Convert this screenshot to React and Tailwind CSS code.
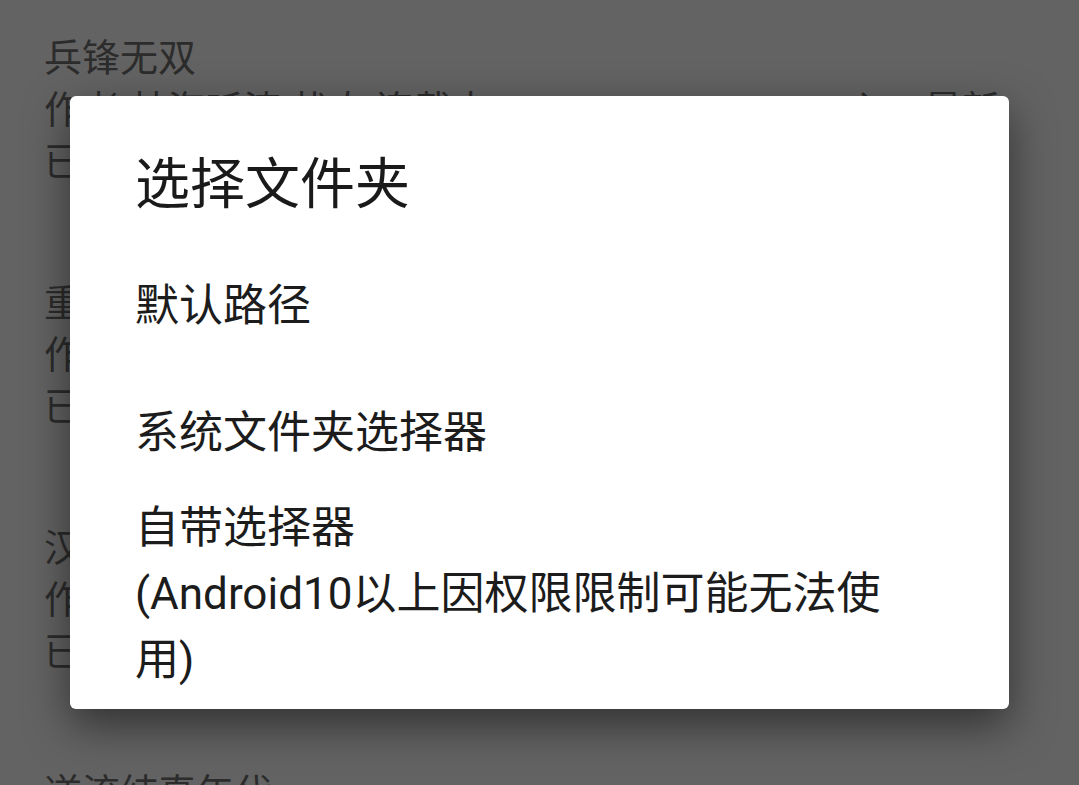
import React from 'react';

const font = { fontFamily: '"Roboto", "Noto Sans CJK SC", sans-serif' };

const books = [
  { title: '兵锋无双', author: '作者:林海听涛  状态:连载中', extra: ['入', '最新'], read: '已读到:第一千二百章 大战将起' },
  { title: '重生之都市修仙', author: '作者:十里剑神  状态:已完结', extra: [], read: '已读到:第八百零六章 归来' },
  { title: '汉乡', author: '作者:孑与2  状态:已完结', extra: [], read: '已读到:第三十二章 蜀中' },
  { title: '逆流纯真年代', author: '作者:人间武库', extra: [], read: '已读到:第五章' },
];

const options = ['默认路径', '系统文件夹选择器'];

export default function App() {
  return (
    <div className="relative w-full h-[785px] overflow-hidden bg-[#636363]" style={font}>
      {/* 背景里的书架列表(被遮罩压暗) */}
      <div className="flex flex-col gap-[89px] pt-[32px] pl-[44px] pr-[44px] text-[38px] leading-[52px] text-[#2c2c2c]">
        {books.map((b) => (
          <div key={b.title} className="flex flex-col">
            <div>{b.title}</div>
            <div className="flex justify-between whitespace-nowrap">
              <span>{b.author}</span>
              <span className="flex gap-[36px] mr-[35px]">
                {b.extra.map((t) => (
                  <span key={t}>{t}</span>
                ))}
              </span>
            </div>
            <div className="whitespace-nowrap">{b.read}</div>
          </div>
        ))}
      </div>

      {/* 选择文件夹 对话框 */}
      <div className="absolute inset-0 flex justify-center items-start pt-[96px]">
        <div className="w-[939px] bg-white rounded-[6px] shadow-[0_16px_44px_rgba(0,0,0,0.5)] pb-[16px]">
          <div className="pt-[53px] pb-[23px] pl-[65px] text-[55px] leading-[70px] text-[#1a1a1a]">
            选择文件夹
          </div>
          <div className="flex flex-col text-[44px] text-[#1c1c1c]">
            <div className="h-[128px] flex items-center pl-[65px] pr-[65px] leading-[66px]">{options[0]}</div>
            <div className="h-[125px] flex items-center pl-[65px] pr-[65px] leading-[66px]">{options[1]}</div>
            <div className="pl-[65px] pr-[65px] leading-[66px]">
              自带选择器
              <br />
              (Android10以上因权限限制可能无法使
              <br />
              用)
            </div>
          </div>
        </div>
      </div>
    </div>
  );
}
